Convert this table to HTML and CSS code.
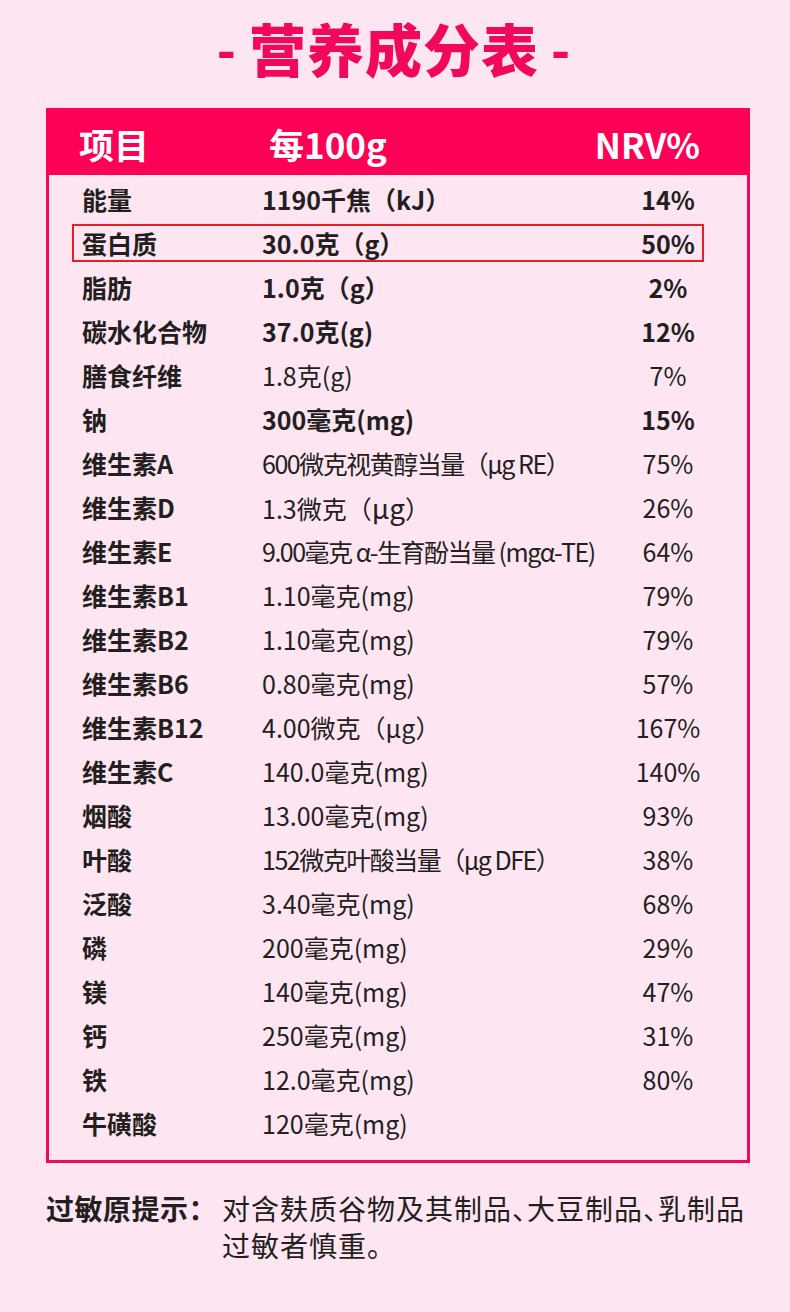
FILE: index.html
```html
<!DOCTYPE html>
<html lang="zh-CN">
<head>
<meta charset="utf-8">
<title>营养成分表</title>
<link rel="stylesheet" href="styles.css">
</head>
<body>
<div class="page">
  <h1 class="title"><span class="dash">-</span>营养成分表<span class="dash">-</span></h1>
  <div class="table">
    <div class="head">
      <span>项目</span><span>每100g</span><span class="nrv">NRV%</span>
    </div>
    <div class="rows">
      <div class="row bold"><span>能量</span><span>1190千焦（kJ）</span><span class="pct">14%</span></div>
      <div class="row bold mark"><span>蛋白质</span><span>30.0克（g）</span><span class="pct">50%</span></div>
      <div class="row bold"><span>脂肪</span><span>1.0克（g）</span><span class="pct">2%</span></div>
      <div class="row bold"><span>碳水化合物</span><span>37.0克(g)</span><span class="pct">12%</span></div>
      <div class="row"><span>膳食纤维</span><span>1.8克(g)</span><span class="pct">7%</span></div>
      <div class="row bold"><span>钠</span><span>300毫克(mg)</span><span class="pct">15%</span></div>
      <div class="row"><span>维生素A</span><span class="tight">600微克视黄醇当量（μg RE）</span><span class="pct">75%</span></div>
      <div class="row"><span>维生素D</span><span>1.3微克（<span class="big">μg</span>）</span><span class="pct">26%</span></div>
      <div class="row"><span>维生素E</span><span class="tight">9.00毫克 α-生育酚当量 (mgα-TE)</span><span class="pct">64%</span></div>
      <div class="row"><span>维生素B1</span><span>1.10毫克(mg)</span><span class="pct">79%</span></div>
      <div class="row"><span>维生素B2</span><span>1.10毫克(mg)</span><span class="pct">79%</span></div>
      <div class="row"><span>维生素B6</span><span>0.80毫克(mg)</span><span class="pct">57%</span></div>
      <div class="row"><span>维生素B12</span><span>4.00微克（μg）</span><span class="pct">167%</span></div>
      <div class="row"><span>维生素C</span><span>140.0毫克(mg)</span><span class="pct">140%</span></div>
      <div class="row"><span>烟酸</span><span>13.00毫克(mg)</span><span class="pct">93%</span></div>
      <div class="row"><span>叶酸</span><span class="tight">152微克叶酸当量（μg DFE）</span><span class="pct">38%</span></div>
      <div class="row"><span>泛酸</span><span>3.40毫克(mg)</span><span class="pct">68%</span></div>
      <div class="row"><span>磷</span><span>200毫克(mg)</span><span class="pct">29%</span></div>
      <div class="row"><span>镁</span><span>140毫克(mg)</span><span class="pct">47%</span></div>
      <div class="row"><span>钙</span><span>250毫克(mg)</span><span class="pct">31%</span></div>
      <div class="row"><span>铁</span><span>12.0毫克(mg)</span><span class="pct">80%</span></div>
      <div class="row"><span>牛磺酸</span><span>120毫克(mg)</span><span class="pct"></span></div>
    </div>
  </div>
  <div class="note">
    <span class="note-label">过敏原提示：</span>
    <span class="note-text">对含麸质谷物及其制品、大豆制品、乳制品过敏者慎重。</span>
  </div>
</div>
</body>
</html>
```

FILE: styles.css
```css
html, body {
  margin: 0;
  padding: 0;
}
body {
  background: #fde6f2;
  font-family: "Noto Sans CJK SC", "Noto Sans", sans-serif;
  color: #231f20;
}
.page {
  width: 790px;
  height: 1312px;
  box-sizing: border-box;
  padding: 0 40px 0 46px;
  overflow: hidden;
}
.title {
  margin: 0;
  height: 108px;
  display: flex;
  align-items: center;
  justify-content: center;
  font-size: 57px;
  font-weight: 900;
  line-height: 1;
  color: #f2085b;
  letter-spacing: 1px;
  padding-bottom: 14px;
  box-sizing: border-box;
  margin-left: -8px;
}
.dash {
  font-weight: 900;
  font-size: 50px;
  padding: 0 12px;
}
.table {
  width: 704px;
  border: 3px solid #ee0b5f;
  box-sizing: border-box;
  height: 1055px;
}
.head {
  background: #fe0157;
  height: 64px;
  display: grid;
  grid-template-columns: 190px 1fr 120px;
  align-items: center;
  padding: 3px 50px 0 33px;
  color: #fff;
  font-size: 35px;
  font-weight: 700;
  line-height: 1;
  margin: -3px -3px 0;
}
.head .nrv {
  text-align: right;
}
.rows {
  padding: 2px 39px 0 33px;
}
.row {
  position: relative;
  display: grid;
  grid-template-columns: 180px 1fr 80px;
  align-items: center;
  height: 44px;
  font-size: 25px;
  line-height: 1;
  white-space: nowrap;
}
.row > span:first-child {
  font-weight: 700;
}
.row.bold > span {
  font-weight: 700;
}
.pct {
  text-align: center;
}
.tight {
  letter-spacing: -1.5px;
}
.big {
  font-size: 28px;
}
.mark::after {
  content: "";
  position: absolute;
  left: -10px;
  right: 4px;
  top: 3px;
  bottom: 3px;
  border: 2px solid #e3202a;
}
.note {
  display: grid;
  grid-template-columns: 176px 1fr;
  margin-top: 27px;
  font-size: 28px;
  line-height: 37px;
}
.note-label {
  font-weight: 700;
  letter-spacing: 0.5px;
}
.note-text {
  font-feature-settings: "halt";
  letter-spacing: 1px;
}
```
